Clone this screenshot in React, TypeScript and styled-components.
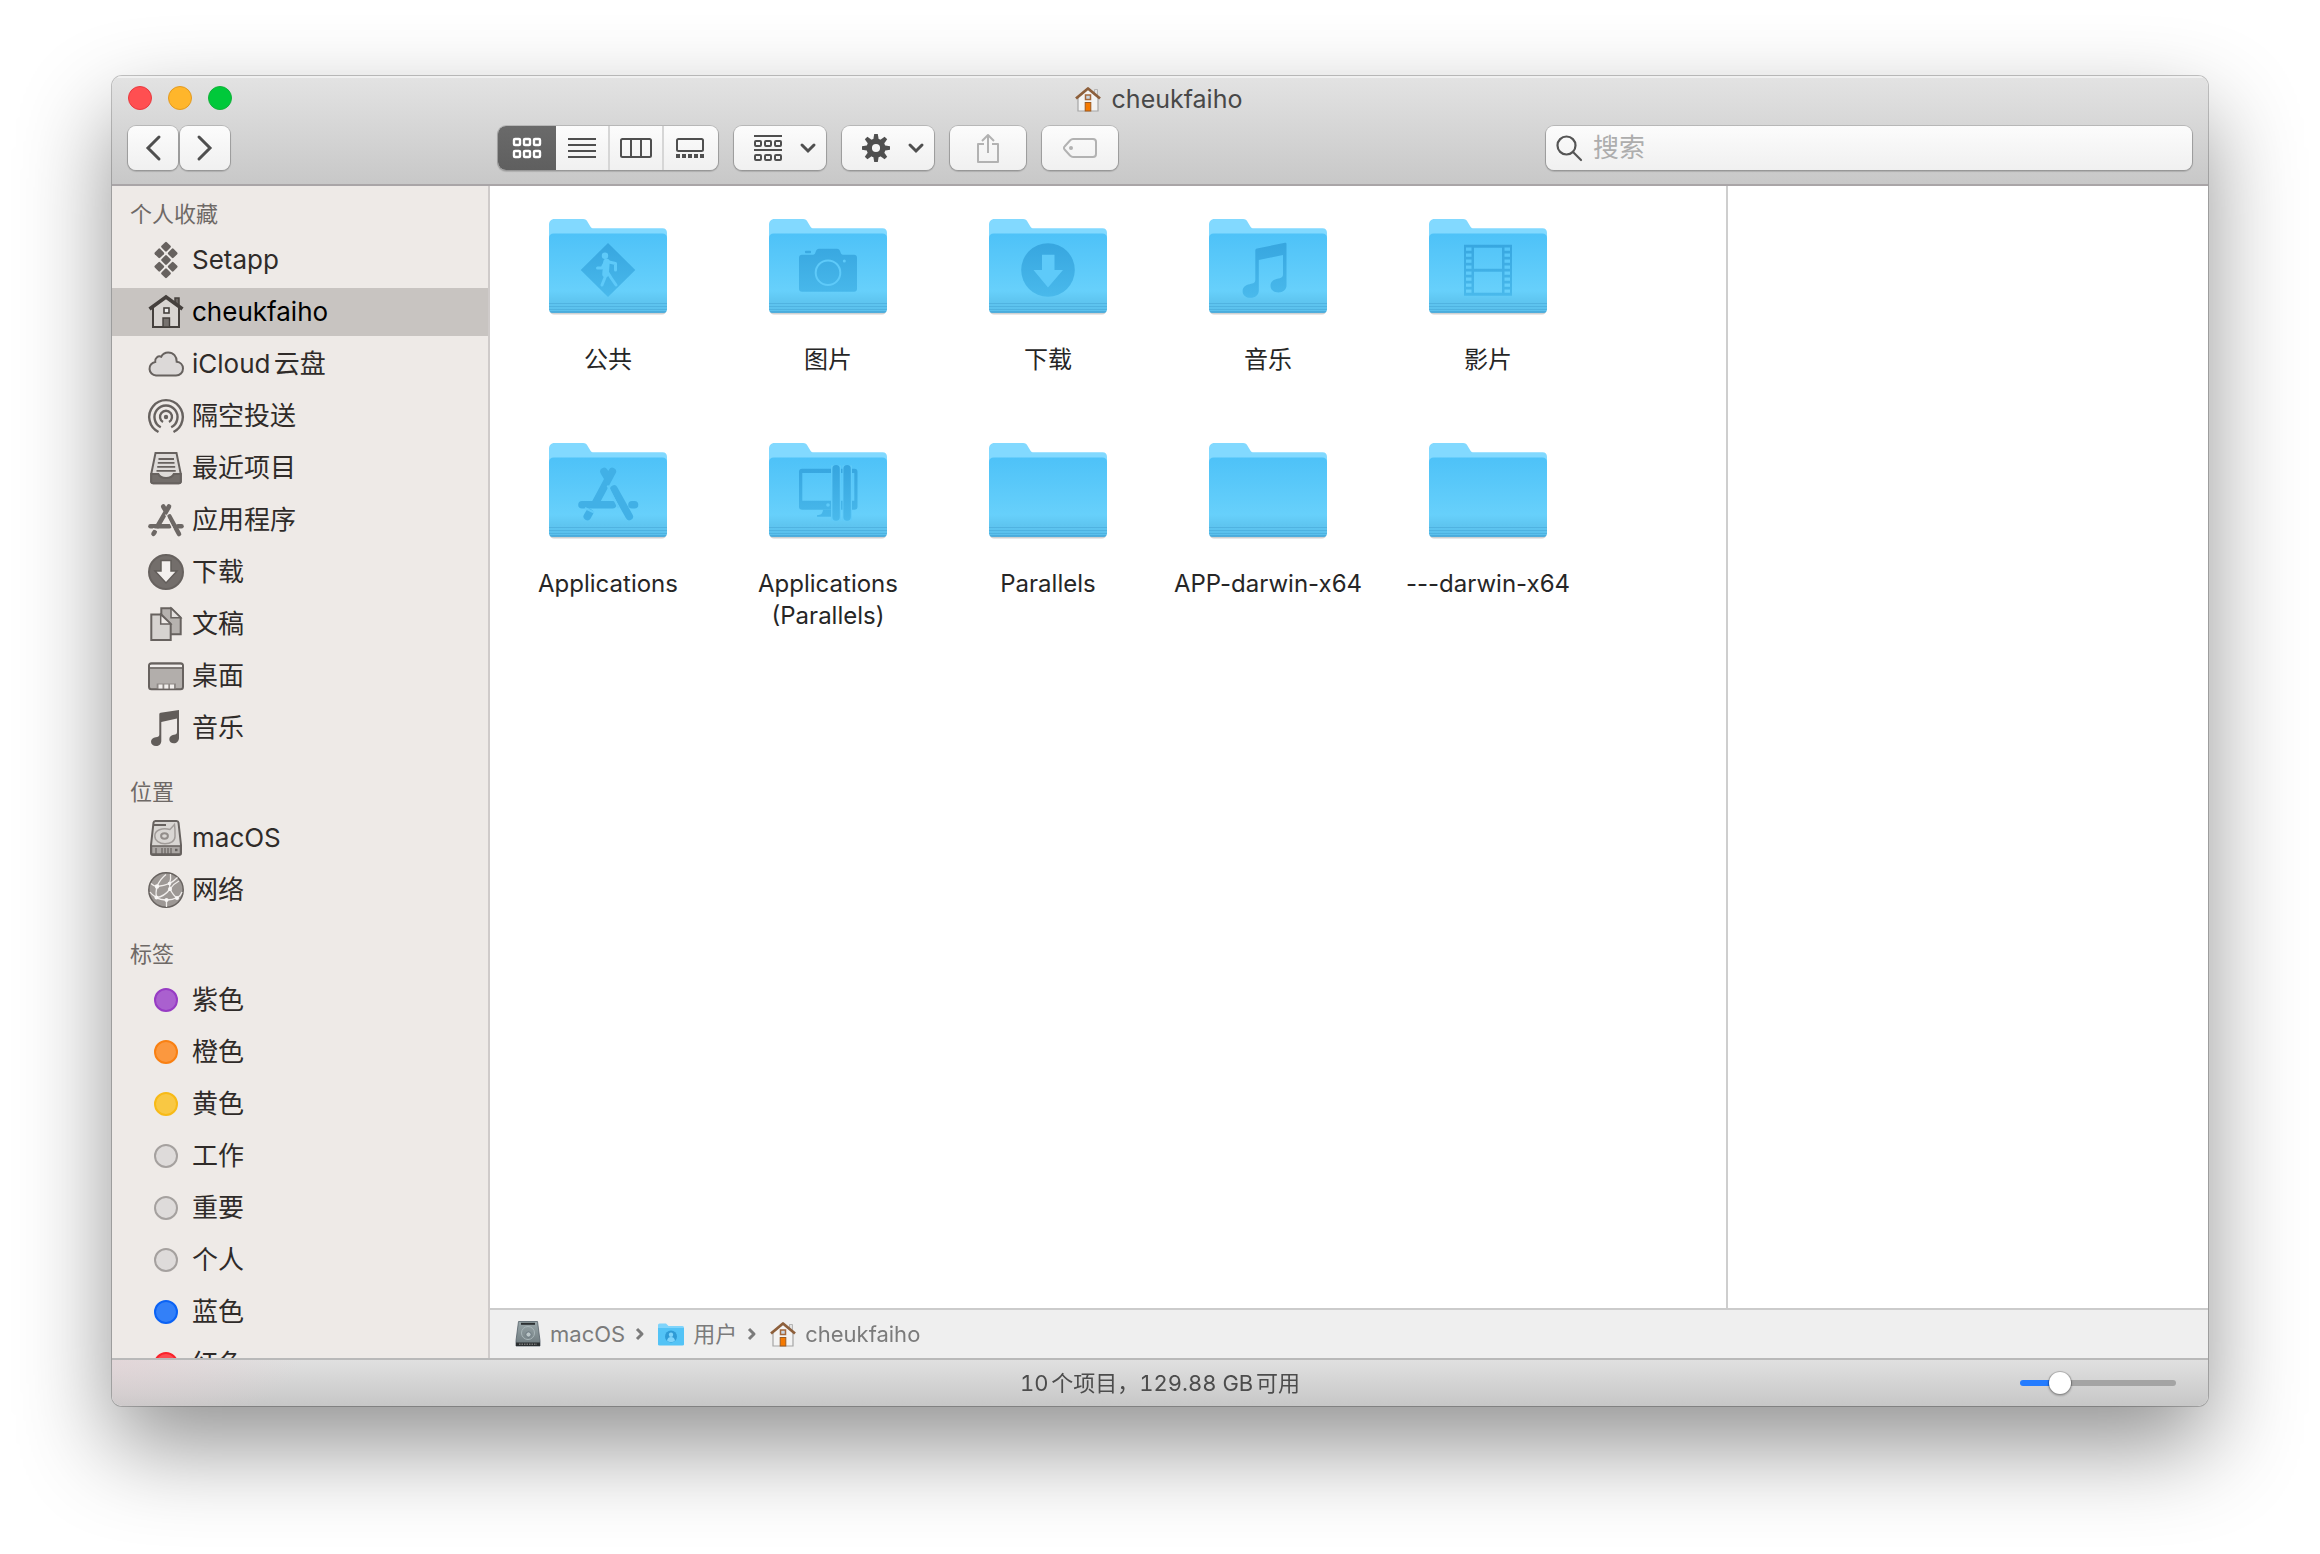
import React, { useState } from "react";
import styled, { createGlobalStyle, css } from "styled-components";

const GlobalStyle = createGlobalStyle`
  *, *::before, *::after { box-sizing: border-box; }
  body {
    margin: 0;
    background: #fff;
    color: #2f2b29;
    font-family: Inter, "Noto Sans CJK SC", sans-serif;
    -webkit-font-smoothing: antialiased;
    text-autospace: normal;
  }
  button, input { font: inherit; color: inherit; }
  ul, ol { list-style: none; margin: 0; padding: 0; }
  a { color: inherit; text-decoration: none; }
  svg { display: block; flex: none; overflow: visible; }
`;

/* ---------- window frame ---------- */

const Desktop = styled.div`
  display: flex;
  height: 100vh;
  min-height: 720px;
  padding: 76px 112px 148px;
`;

const Window = styled.main`
  flex: 1;
  min-width: 0;
  display: flex;
  flex-direction: column;
  overflow: hidden;
  border-radius: 10px;
  background: #fff;
  box-shadow: 0 0 0 1px rgba(0, 0, 0, 0.22), 0 40px 92px rgba(0, 0, 0, 0.43);
`;

const Header = styled.header`
  display: flex;
  flex-direction: column;
  gap: 6px;
  padding: 0 16px 14px;
  background: linear-gradient(#e3e3e3, #c8c8c8);
  border-bottom: 2px solid #a9a5a7;
  box-shadow: inset 0 2px 0 #f0f0f0;
`;

const TitleRow = styled.div`
  display: grid;
  grid-template-columns: 1fr auto 1fr;
  align-items: center;
  height: 44px;
`;

const Lights = styled.div`
  display: flex;
  gap: 16px;
`;

const Light = styled.button<{ $fill: string; $edge: string }>`
  width: 24px;
  height: 24px;
  padding: 0;
  border: 1px solid ${(p) => p.$edge};
  border-radius: 50%;
  background: ${(p) => p.$fill};
`;

const Title = styled.h1`
  display: flex;
  align-items: center;
  gap: 10px;
  margin: 0;
  padding: 2px 4px 0 0;
  font-size: 25px;
  line-height: 32px;
  font-weight: 400;
  color: #484848;
`;

const Toolbar = styled.div`
  display: flex;
  align-items: center;
  gap: 16px;
`;

const NavArea = styled.div`
  display: flex;
  gap: 2px;
  width: 354px;
`;

const raised = css`
  height: 44px;
  border: 0;
  border-radius: 8px;
  background: linear-gradient(#fcfcfc, #f0f0f0);
  box-shadow: 0 0 0 1px rgba(0, 0, 0, 0.13), 0 1px 1px 1px rgba(0, 0, 0, 0.14);
`;

const ToolButton = styled.button<{ $width: number; $faded?: boolean }>`
  ${raised}
  display: flex;
  align-items: center;
  justify-content: center;
  width: ${(p) => p.$width}px;
  padding: 0;
  color: ${(p) => (p.$faded ? "#b2b2b2" : "#4f4f4f")};
`;

const MenuButton = styled(ToolButton)`
  gap: 18px;
  padding-left: 10px;
`;

const Segments = styled.div`
  ${raised}
  display: flex;
  overflow: hidden;
`;

const Segment = styled.button<{ $active: boolean }>`
  display: flex;
  align-items: center;
  justify-content: center;
  width: ${(p) => (p.$active ? 58 : 54)}px;
  padding: 0;
  border: 0;
  border-right: ${(p) => (p.$active ? "0" : "2px solid #d6d6d6")};
  background: ${(p) => (p.$active ? "linear-gradient(#6a6a6a, #5f5f5f)" : "transparent")};
  color: ${(p) => (p.$active ? "#fff" : "#4f4f4f")};
  &:last-child { border-right-color: transparent; }
`;

const SearchField = styled.label`
  ${raised}
  display: flex;
  align-items: center;
  gap: 10px;
  flex: 0 1 646px;
  min-width: 120px;
  margin-left: auto;
  padding: 0 10px;
  color: #555;
`;

const SearchInput = styled.input`
  flex: 1;
  min-width: 0;
  padding: 0;
  border: 0;
  outline: 0;
  background: none;
  font-size: 26px;
  line-height: 32px;
  &::placeholder { color: #adadad; opacity: 1; }
`;

/* ---------- body ---------- */

const Body = styled.div`
  flex: 1;
  min-height: 0;
  display: flex;
`;

const Sidebar = styled.nav`
  flex: none;
  display: flex;
  flex-direction: column;
  gap: 26px;
  width: 378px;
  padding-top: 14px;
  overflow-y: auto;
  scrollbar-width: none;
  background: #eeeae7;
  border-right: 2px solid #cfcbca;
`;

const SectionTitle = styled.h2`
  margin: 0 0 8px;
  padding-left: 18px;
  font-size: 22px;
  line-height: 28px;
  font-weight: 400;
  color: #6e6966;
`;

const ItemList = styled.ul`
  display: flex;
  flex-direction: column;
  gap: 4px;
`;

const SideLink = styled.a<{ $selected?: boolean }>`
  display: flex;
  align-items: center;
  gap: 8px;
  height: 48px;
  padding-left: 36px;
  font-size: 26px;
  line-height: 32px;
  color: ${(p) => (p.$selected ? "#000" : "#2f2b29")};
  background: ${(p) => (p.$selected ? "#c8c4c1" : "transparent")};
`;

const TagDot = styled.span<{ $fill: string; $edge: string }>`
  width: 24px;
  height: 24px;
  margin: 0 6px;
  border: 2px solid ${(p) => p.$edge};
  border-radius: 50%;
  background: ${(p) => p.$fill};
`;

const Content = styled.div`
  flex: 1;
  min-width: 0;
  display: flex;
  flex-direction: column;
`;

const Panes = styled.div`
  flex: 1;
  min-height: 0;
  display: flex;
`;

const FileGrid = styled.ul`
  flex: 1;
  display: grid;
  grid-template-columns: repeat(auto-fill, 220px);
  grid-auto-rows: 224px;
  align-content: start;
  padding: 33px 8px 0;
`;

const Preview = styled.aside`
  flex: none;
  width: 482px;
  border-left: 2px solid #cecece;
`;

const FileButton = styled.button`
  display: flex;
  flex-direction: column;
  align-items: center;
  gap: 27px;
  width: 220px;
  padding: 0 10px;
  border: 0;
  background: none;
  font-size: 24px;
  line-height: 32px;
  color: #262626;
`;

const PathBar = styled.ol`
  display: flex;
  align-items: center;
  height: 50px;
  padding: 0 24px;
  border-top: 2px solid #cbcbcb;
  background: #efefef;
  font-size: 22px;
  line-height: 28px;
  color: #7b7b7b;
`;

const Crumb = styled.li`
  display: flex;
  align-items: center;
`;

const CrumbLink = styled.a`
  display: flex;
  align-items: center;
  gap: 8px;
`;

const CrumbArrow = styled.span`
  margin: 0 12px 0 10px;
`;

const StatusBar = styled.footer`
  display: grid;
  grid-template-columns: 1fr auto 1fr;
  align-items: center;
  height: 48px;
  padding: 0 32px;
  border-top: 2px solid #b9b9b9;
  background:
    radial-gradient(190px 70px at 0 0, rgba(228, 208, 212, 0.6), transparent),
    linear-gradient(#e0e0e0, #c7c7c7);
  font-size: 22px;
  line-height: 28px;
  color: #4c4c4c;
`;

const ZoomSlider = styled.input`
  grid-column: 3;
  justify-self: end;
  appearance: none;
  width: 156px;
  height: 28px;
  margin: 0;
  background: none;
  &::-webkit-slider-runnable-track {
    height: 6px;
    border-radius: 3px;
    background: linear-gradient(90deg, #247cff var(--fill), #a4a4a4 var(--fill));
  }
  &::-webkit-slider-thumb {
    appearance: none;
    width: 22px;
    height: 22px;
    margin-top: -8px;
    border-radius: 50%;
    background: #fff;
    box-shadow: 0 0 0 1px rgba(0, 0, 0, 0.14), 0 1px 2px 1px rgba(0, 0, 0, 0.22);
  }
`;

const StatusText = styled.span`
  grid-column: 2;
  font-variant-numeric: tabular-nums;
`;

/* ---------- toolbar drawings ---------- */

type SvgProps = { w: number; h: number; children: React.ReactNode; sw?: number };
const Line = ({ w, h, children, sw = 2 }: SvgProps) => (
  <svg width={w} height={h} viewBox={`0 0 ${w} ${h}`} fill="none" stroke="currentColor" strokeWidth={sw} aria-hidden="true">
    {children}
  </svg>
);

const cells = (y: number, h: number, w = 6) =>
  [1, 11, 21].map((x) => <rect key={`${x}-${y}`} x={x} y={y} width={w} height={h} rx="1" />);

const BackIcon = () => <Line w={16} h={26} sw={3}><path d="M14 2 3 13l11 11" strokeLinecap="round" /></Line>;
const ForwardIcon = () => <Line w={16} h={26} sw={3}><path d="m2 2 11 11L2 24" strokeLinecap="round" /></Line>;
const GridIcon = () => <Line w={28} h={20} sw={2.4}>{cells(1, 6)}{cells(13, 6)}</Line>;
const ListIcon = () => <Line w={28} h={20}><path d="M0 1h28M0 7h28M0 13h28M0 19h28" /></Line>;
const ColumnsIcon = () => (
  <Line w={32} h={20}><rect x="1" y="1" width="30" height="18" rx="1.5" /><path d="M11 1v18M21 1v18" /></Line>
);
const GalleryIcon = () => (
  <Line w={28} h={20}><rect x="1" y="1" width="26" height="12" rx="1.5" /><path d="M0 18h28" strokeWidth="4" strokeDasharray="4 2" /></Line>
);
const GroupIcon = () => (
  <Line w={28} h={26}><path d="M0 1h28M0 15h28" />{cells(6, 5)}{cells(20, 5)}</Line>
);
const DownIcon = () => <Line w={16} h={10} sw={3}><path d="m2 2 6 6 6-6" strokeLinecap="round" /></Line>;
const GearIcon = () => (
  <Line w={28} h={28} sw={5.5}>
    <circle cx="14" cy="14" r="6.8" />
    {[0, 45, 90, 135, 180, 225, 270, 315].map((a) => (
      <path key={a} d="M11.2 6 12.2 0h3.6l1 6z" transform={`rotate(${a} 14 14)`} fill="currentColor" stroke="none" />
    ))}
  </Line>
);
const ShareIcon = () => (
  <Line w={22} h={30}><path d="M7 11H1v18h20V11h-6M11 20V2M5 8l6-6 6 6" strokeLinejoin="round" /></Line>
);
const TagIcon = () => (
  <Line w={34} h={20}>
    <path d="M10 1h20a3 3 0 0 1 3 3v12a3 3 0 0 1-3 3H10c-1 0-2-.5-3-1.500L1.600 11.500a2 2 0 0 1 0-3L7 2.500C8 1.500 9 1 10 1Z" />
    <circle cx="8" cy="10" r="2" fill="currentColor" stroke="none" />
  </Line>
);
const SearchIcon = () => (
  <Line w={27} h={26} sw={2.2}><circle cx="10.500" cy="10.500" r="9" /><path d="m17 17 8 8" strokeLinecap="round" /></Line>
);
const CrumbChevron = () => <Line w={10} h={12} sw={3}><path d="m2 1 5 5-5 5" strokeLinejoin="round" /></Line>;

/* ---------- sidebar drawings ---------- */

const Glyph = ({ children }: { children: React.ReactNode }) => (
  <svg width="36" height="36" viewBox="0 0 36 36" fill="none" stroke="#67625f" strokeWidth="2" aria-hidden="true">
    {children}
  </svg>
);

const setappDots = [[18, 4.7], [11.3, 11.3], [24.7, 11.3], [18, 18], [11.3, 24.7], [24.7, 24.7], [18, 31.3]];

const SetappIcon = () => (
  <Glyph>
    {setappDots.map(([x, y]) => (
      <rect key={`${x}-${y}`} x={x - 3.8} y={y - 3.8} width="7.6" height="7.6" rx="1.2" fill="#67625f" stroke="none" transform={`rotate(45 ${x} ${y})`} />
    ))}
  </Glyph>
);
const HomeIcon = () => (
  <Glyph>
    <g stroke="#45403d">
      <path d="M27 10V4h4v9z" fill="#6a6562" strokeWidth="1.500" />
      <path d="M5 13v20h26V13L18 3z" fill="#d8d4d1" stroke="none" />
      <path d="M5 14v19h26V14" />
      <path d="M1.500 15 18 3l16.500 12" strokeWidth="3.600" />
      <rect x="16" y="14" width="5" height="5" fill="#eee" strokeWidth="1.600" />
      <path d="M15 33V24h6.500v9z" fill="#77726f" strokeWidth="1.400" />
    </g>
  </Glyph>
);
const CloudIcon = () => (
  <Glyph>
    <path d="M8 29.500a6.800 6.800 0 0 1-.800-13.500c-.600-4 2.800-6.500 6-5.300 1.300-2.600 4-4.200 7-4.200 5.200 0 8.700 4 8.500 9.200 3.600.400 6.300 3.200 6.300 6.700 0 4-3 7.100-7 7.100z" fill="#dcd9d8" />
  </Glyph>
);
const AirdropIcon = () => (
  <Glyph>
    <g strokeWidth="2.400">
      <path d="M10.500 34A16.800 16.800 0 1 1 25.500 34" />
      <path d="M12.800 29.300A11.500 11.500 0 1 1 23.200 29.300" />
      <path d="M15 24A6 6 0 1 1 21 24" />
    </g>
    <circle cx="18" cy="19" r="2.200" fill="#67625f" stroke="none" />
  </Glyph>
);
const RecentsIcon = () => (
  <Glyph>
    <path d="M7.500 3h21l4.300 21v7.500a2 2 0 0 1-2 1.800H5.200a2 2 0 0 1-2-1.800V24z" fill="#dedbd9" />
    <path d="M3.300 24h7c2.500 5.300 13 5.300 15.500 0h7v7.500a2 2 0 0 1-2 1.800H5.200a2 2 0 0 1-2-1.800z" fill="#736e6b" />
    <path d="M10.500 9h15.500M9.800 12.800h16.700M9.200 16.800h18M8.500 20.800h19.200" strokeWidth="1.800" />
  </Glyph>
);
const AppsIcon = () => (
  <Glyph>
    <g strokeWidth="4.600" strokeLinecap="round" stroke="#6d6865">
      <path d="M21 4.500 9.700 24" />
      <path d="M15.200 4.500 17 7.500" />
      <path d="M2.500 24.300h19" />
      <path d="M30 24.300h3.500" />
      <path d="M5.500 31.800 6.700 30" />
      <path d="M31 32 21.500 14.500" />
    </g>
    <path d="M17.600 12.500 25 27M9 28.200l-4-1.700" stroke="#eeeae7" strokeWidth="1.200" />
  </Glyph>
);
const DownloadIcon = () => (
  <Glyph>
    <circle cx="18" cy="18" r="17" fill="#736e6b" />
    <path d="M13 6.500h10v10.500h6L18 29 7 17h6z" fill="#f3f0ee" stroke="#625d5a" strokeWidth="1.500" />
  </Glyph>
);
const DocsIcon = () => (
  <Glyph>
    <path d="M13.300 2.300h10l9.400 9.400v16.500H13.300z" fill="#b6b2af" />
    <path d="M23 2.300v9.400h9.700z" fill="#e3e0de" strokeWidth="1.500" />
    <path d="M3.300 8.500h10l9.400 9.400v16H3.300z" fill="#d6d3d0" />
    <path d="M12.700 8.500v9.400h10z" fill="#eeeae7" strokeWidth="1.500" />
  </Glyph>
);
const DesktopIcon = () => (
  <Glyph>
    <rect x="1" y="5.300" width="34" height="26" rx="2.500" fill="#b2aeab" />
    <path d="M2 7h32v2.300H2z" fill="#f1eeec" stroke="none" />
    <path d="M1 10h34" strokeWidth="1.400" />
    <path d="M9.300 30.300V26h18v4.300" strokeWidth="1.200" stroke="#8d8885" fill="#8d8885" />
    <path d="M10.500 26.500h4v4h-4zM16.300 26.500h4v4h-4zM22 26.500h4v4h-4z" fill="#f1eeec" stroke="none" />
  </Glyph>
);
const MusicIcon = () => (
  <Glyph>
    <path d="M11.300 4.300c0-1 .500-1.400 1.300-1.600L31 0v28c0 3-2.300 5.300-5.200 5.300-2.600 0-4.500-1.600-4.500-4 0-2.600 2-4.300 4.600-4.600 2.100-.2 3.100-.7 3.100-2.700V8.600L13.300 12v19c0 3-2.300 5-5.300 5-2.800 0-5-1.500-5-4.200 0-2.500 2-4.200 4.700-4.500 2.400-.2 3.600-.8 3.600-2.800z" fill="#625d5a" stroke="none" />
  </Glyph>
);
const DriveIcon = () => (
  <Glyph>
    <path d="M7.500 1h21a2 2 0 0 1 2 1.700L33 25v8a2 2 0 0 1-2 2H5a2 2 0 0 1-2-2v-8L5.500 2.700A2 2 0 0 1 7.500 1z" fill="#d9d6d3" />
    <path d="M3.500 26h29v8h-29z" fill="#aaa6a3" strokeWidth="1.500" />
    <path d="M6 5h12" />
    <path d="M26.500 4.500 22 9.500C14 7 6.800 10.500 6.800 16c0 4.500 4.700 7.800 10.200 7.800S27 21 27 16.500c0-2 .3-7-.5-12z" stroke="#a19c99" strokeWidth="1.500" />
    <ellipse cx="16.500" cy="16" rx="3.400" ry="2.700" stroke="#928d8a" />
    <path d="M8 28v6M14 28v6M17 28v6M20 28v6M23 28v6" strokeWidth="1.200" />
    <path d="M27 30h2.500" strokeWidth="2.400" />
  </Glyph>
);
const NetworkIcon = () => (
  <Glyph>
    <circle cx="18" cy="18" r="17.200" fill="#9d9895" strokeWidth="1.500" />
    <g stroke="#f1eeec" strokeWidth="1.300">
      <path d="M3 11.500c2 2 4 3 6 3 2-5 5-9 9-12M9 14.500c5-.500 9-1.500 12.500-3 4-2 6-4 8-6M21.500 11.500c1-3 1.500-6 1-9.500M9 14.500c-1 4-1.500 7-.500 11M21.500 11.500l.5 5.500c2-3 5-6 9-8M22 17c2 4 4 7 7 9M22 17c-3 4-8 8-13.500 8.500M8.500 25.500c3 2 6 2.500 10 2.500s8-1 10.500-2.500M2 20c2 3 4 4 6.500 5.500M18.500 28v7M29 26c2-1 4-3 5-6" />
    </g>
    <g fill="#f8f6f5" stroke="none">
      <circle cx="9" cy="14.500" r="2.200" /><circle cx="22" cy="17" r="2" /><circle cx="8.500" cy="25.500" r="2" />
      <circle cx="18.500" cy="28" r="2" /><circle cx="29" cy="26" r="2" /><circle cx="21.500" cy="11.500" r="1.800" />
    </g>
  </Glyph>
);

/* ---------- coloured small drawings ---------- */

const HouseIcon = () => (
  <svg width="28" height="28" viewBox="0 0 28 28" aria-hidden="true">
    <path d="M20.500 4.500h3V11h-3z" fill="#e2e2e2" stroke="#b5b5b5" />
    <path d="M4 12 14 3.500 24 12v14H4z" fill="#f3f3f3" stroke="#a5a5a5" strokeWidth="1.200" />
    <path d="M2 13.500 14 3.500l12 10" fill="none" stroke="#8d5f3b" strokeWidth="2.800" strokeLinejoin="round" />
    <rect x="11.500" y="10" width="5" height="4.500" fill="#c9d6e2" stroke="#a5683b" strokeWidth="1.500" />
    <rect x="11.200" y="17.500" width="5.600" height="8.500" fill="#f57900" stroke="#9d5a20" />
  </svg>
);

const DiskIcon = () => (
  <svg width="28" height="28" viewBox="0 0 28 28" aria-hidden="true">
    <defs>
      <linearGradient id="disk" x1="0" y1="0" x2="0" y2="1">
        <stop offset="0" stopColor="#9aa7aa" />
        <stop offset="1" stopColor="#6c787c" />
      </linearGradient>
    </defs>
    <path d="M4.500 1.500h19L26 20.500v5.500H2v-5.500z" fill="url(#disk)" stroke="#56616a" strokeWidth="0.800" />
    <path d="M2 22.500h24V26H2z" fill="#2b2f31" />
    <path d="M5 24.200h18" stroke="#777" strokeWidth="1.500" strokeDasharray="1.500 1" />
    <path d="M7 3.800h14" stroke="#2b2f31" strokeWidth="2" />
    <circle cx="14" cy="13" r="6.500" fill="none" stroke="#a9b6b9" />
    <circle cx="14.500" cy="14.500" r="2.600" fill="#bcc7c9" stroke="#63717a" strokeWidth="0.800" />
  </svg>
);

const UsersFolderIcon = () => (
  <svg width="28" height="28" viewBox="0 0 28 28" aria-hidden="true">
    <path d="M1 5a1.500 1.500 0 0 1 1.500-1.500H9L11.500 6h14A1.500 1.500 0 0 1 27 7.500V25H1z" fill="#7fd4fb" />
    <path d="M1 8h26v16a1.500 1.500 0 0 1-1.500 1.500h-23A1.500 1.500 0 0 1 1 24z" fill="#53c3f6" />
    <circle cx="14" cy="16.500" r="6" fill="#2f9bd6" />
    <circle cx="14" cy="14.700" r="2.200" fill="#7fd4fb" />
    <path d="M10 20.500c.5-2.500 2-3.500 4-3.500s3.500 1 4 3.500c-2 2-6 2-8 0z" fill="#7fd4fb" />
  </svg>
);

/* ---------- folder drawings ---------- */

const FolderGlyph = styled.g`
  color: #5ecaf9;
`;

const Folder = ({ children }: { children?: React.ReactNode }) => {
  const id = React.useId();
  return (
    <svg width="120" height="98" viewBox="0 0 120 98" aria-hidden="true">
      <defs>
        <linearGradient id={`${id}f`} x1="0" y1="15" x2="0" y2="94" gradientUnits="userSpaceOnUse">
          <stop offset="0" stopColor="#4ec2f8" />
          <stop offset="0.720" stopColor="#67d0fb" />
          <stop offset="0.840" stopColor="#5fc6f1" />
          <stop offset="1" stopColor="#5abfeb" />
        </linearGradient>
        <linearGradient id={`${id}g`} x1="0" y1="22" x2="0" y2="80" gradientUnits="userSpaceOnUse">
          <stop offset="0" stopColor="#36a5df" />
          <stop offset="1" stopColor="#4abaec" />
        </linearGradient>
      </defs>
      <rect x="2" y="86" width="116" height="9.500" rx="4" fill="#000" opacity="0.180" />
      <path d="M1 6c0-3.500 2-6 5.500-6H35c2.500 0 3.700 1.200 4.800 3.200l2.400 4C43.200 8.800 44 9.300 46 9.300h68.500c3 0 4.500 1.800 4.500 4.700v30H1z" fill="#82d9ff" />
      <path d="M1 19c0-2.800 1.800-4.500 4.500-4.500h109c2.700 0 4.500 1.700 4.500 4.500v71c0 2.500-1.200 3.800-3.500 3.800H4.500C2.200 93.800 1 92.500 1 90z" fill={`url(#${id}f)`} />
      <path d="M1 84.500h118M1 87.500h118M1 90.500h118" stroke="#47a9d8" strokeWidth="1" opacity="0.600" />
      <path d="M1.500 92.300h117a3.200 3.200 0 0 1-3 1.500H4.500a3.200 3.200 0 0 1-3-1.500z" fill="#45a7d8" />
      <FolderGlyph fill={`url(#${id}g)`} stroke="none">{children}</FolderGlyph>
    </svg>
  );
};

const PublicArt = () => (
  <>
    <path d="M60 24 87.300 51 60 78 32.700 51z" />
    <circle cx="57" cy="36.800" r="3.200" fill="currentColor" />
    <path d="M58.500 43 57.500 55" stroke="currentColor" strokeWidth="6.500" strokeLinecap="round" fill="none" />
    <path d="M57 43.500 54 49h-4.500M61 43l6.500 1.500V51M58 56l-4 10M60 54l3.500 5.500 4.500 6.500" stroke="currentColor" strokeWidth="3" strokeLinecap="round" strokeLinejoin="round" fill="none" />
  </>
);
const PicturesArt = () => (
  <>
    <path d="M34 35.700h11c1.500 0 2-1 2.500-2.500.700-2.200 1.500-3.500 3.500-3.500h18c2 0 2.800 1.300 3.500 3.500.500 1.500 1 2.500 2.500 2.500h11a3 3 0 0 1 3 3v31a3 3 0 0 1-3 3H34a3 3 0 0 1-3-3v-31a3 3 0 0 1 3-3z" />
    <rect x="37" y="31.700" width="6" height="2.600" rx="0.800" />
    <circle cx="60" cy="53.700" r="12.300" fill="none" stroke="currentColor" strokeWidth="2" />
    <circle cx="76.300" cy="42" r="1.500" fill="currentColor" />
  </>
);
const DownloadsArt = () => (
  <>
    <circle cx="60" cy="51" r="26.800" />
    <path d="M54 35.700h12.500V51H75L60 68.500 45.500 51H54z" fill="currentColor" />
  </>
);
const MusicArt = () => (
  <path d="M47.300 31.500c0-1.300.500-1.900 1.700-2.100l28-5.600c.900-.200 1.500.200 1.500 1.200v41.500c0 4-3.500 6.900-8 6.900-4.700 0-8-2.700-8-6.700 0-3.700 2.700-6 6.700-6.900 4.300-.8 5.800-1.500 5.800-4.500V36L50.800 41v30.500c0 4.500-3.500 7.300-8.300 7.300-4.700 0-7.900-2.600-7.900-6.600s2.900-6.200 7-7c4.200-.8 5.700-1.400 5.700-4.600z" />
);
const holes = [0, 1, 2, 3, 4, 5, 6, 7].map((n) => `M38 ${28.5 + n * 6}h5.500v3.200H38zM76.500 ${28.5 + n * 6}H82v3.200h-5.500z`).join("");
const MoviesArt = () => (
  <path fillRule="evenodd" d={`M36 25.700h48v51H36zM46 28.700v21h28v-21zM46 52.700v21h28v-21z${holes}`} />
);
const AppsArt = () => (
  <>
    <g fill="none" stroke="#41b0e6" strokeWidth="7.600" strokeLinecap="round">
      <path d="M64.300 28.500 47.500 60M56 28.500l3.500 6M34 61.700h30.500M84 61.700h2.500M39.300 73.500l2.200-3.800M81.300 73.500 66 46" />
    </g>
    <path d="M59.500 42.500 70.500 65M46 69.500 37 65" stroke="currentColor" strokeWidth="2" fill="none" />
  </>
);
const ParallelsArt = () => (
  <>
    <path fillRule="evenodd" d="M34 25.700h52.500a3 3 0 0 1 3 3v35a3 3 0 0 1-3 3H34a3 3 0 0 1-3-3v-35a3 3 0 0 1 3-3zM34.300 30v27.700h52V30z" />
    <path d="M55 66.700h8v7H49v-1.500c4-.200 5.500-1.500 6-5.500z" />
    <circle cx="60" cy="62" r="1.800" fill="currentColor" />
    <path d="M63 22.500h10v55H63zM74.500 22.500h9.500v55h-9.500z" fill="currentColor" />
    <rect x="64.400" y="22" width="7.400" height="55.700" rx="3.700" />
    <rect x="75.400" y="22" width="7.400" height="55.700" rx="3.700" />
  </>
);

/* ---------- data ---------- */

const sections = [
  {
    title: "个人收藏",
    items: [
      { name: "Setapp", Icon: SetappIcon },
      { name: "cheukfaiho", Icon: HomeIcon, selected: true },
      { name: "iCloud云盘", Icon: CloudIcon },
      { name: "隔空投送", Icon: AirdropIcon },
      { name: "最近项目", Icon: RecentsIcon },
      { name: "应用程序", Icon: AppsIcon },
      { name: "下载", Icon: DownloadIcon },
      { name: "文稿", Icon: DocsIcon },
      { name: "桌面", Icon: DesktopIcon },
      { name: "音乐", Icon: MusicIcon },
    ],
  },
  {
    title: "位置",
    items: [
      { name: "macOS", Icon: DriveIcon },
      { name: "网络", Icon: NetworkIcon },
    ],
  },
];

const tags = [
  { name: "紫色", fill: "#aa60cf", edge: "#973cc4" },
  { name: "橙色", fill: "#fb983f", edge: "#f98012" },
  { name: "黄色", fill: "#f9c843", edge: "#f7ba17" },
  { name: "工作", fill: "#dedbda", edge: "#a5a19f" },
  { name: "重要", fill: "#dedbda", edge: "#a5a19f" },
  { name: "个人", fill: "#dedbda", edge: "#a5a19f" },
  { name: "蓝色", fill: "#3380f8", edge: "#0a62f5" },
  { name: "红色", fill: "#fc4b51", edge: "#f9232b" },
];

const files = [
  { name: "公共", Art: PublicArt },
  { name: "图片", Art: PicturesArt },
  { name: "下载", Art: DownloadsArt },
  { name: "音乐", Art: MusicArt },
  { name: "影片", Art: MoviesArt },
  { name: "Applications", Art: AppsArt },
  { name: "Applications (Parallels)", Art: ParallelsArt },
  { name: "Parallels" },
  { name: "APP-darwin-x64" },
  { name: "---darwin-x64" },
];

const views = [
  { name: "图标", Icon: GridIcon },
  { name: "列表", Icon: ListIcon },
  { name: "分栏", Icon: ColumnsIcon },
  { name: "画廊", Icon: GalleryIcon },
];

const path = [
  { name: "macOS", Icon: DiskIcon },
  { name: "用户", Icon: UsersFolderIcon },
  { name: "cheukfaiho", Icon: HouseIcon },
];

export default function App() {
  const [view, setView] = useState("图标");
  const [size, setSize] = useState(22);

  return (
    <Desktop>
      <GlobalStyle />
      <Window>
        <Header>
          <TitleRow>
            <Lights>
              <Light $fill="#ff4f51" $edge="#e8393f" aria-label="关闭" />
              <Light $fill="#ffb62b" $edge="#e29a20" aria-label="最小化" />
              <Light $fill="#00c93a" $edge="#12b03a" aria-label="缩放" />
            </Lights>
            <Title><HouseIcon />cheukfaiho</Title>
          </TitleRow>
          <Toolbar>
            <NavArea>
              <ToolButton $width={50} aria-label="后退"><BackIcon /></ToolButton>
              <ToolButton $width={50} aria-label="前进"><ForwardIcon /></ToolButton>
            </NavArea>
            <Segments role="group" aria-label="显示方式">
              {views.map(({ name, Icon }) => (
                <Segment key={name} $active={view === name} aria-pressed={view === name} aria-label={name} onClick={() => setView(name)}>
                  <Icon />
                </Segment>
              ))}
            </Segments>
            <MenuButton $width={92} aria-label="分组" aria-haspopup="menu"><GroupIcon /><DownIcon /></MenuButton>
            <MenuButton $width={92} aria-label="操作" aria-haspopup="menu"><GearIcon /><DownIcon /></MenuButton>
            <ToolButton $width={76} $faded aria-label="共享"><ShareIcon /></ToolButton>
            <ToolButton $width={76} $faded aria-label="标签"><TagIcon /></ToolButton>
            <SearchField>
              <SearchIcon />
              <SearchInput type="text" placeholder="搜索" aria-label="搜索" />
            </SearchField>
          </Toolbar>
        </Header>

        <Body>
          <Sidebar>
            {sections.map((section) => (
              <section key={section.title}>
                <SectionTitle>{section.title}</SectionTitle>
                <ItemList>
                  {section.items.map(({ name, Icon, selected }: { name: string; Icon: React.FC; selected?: boolean }) => (
                    <li key={name}>
                      <SideLink href="#" $selected={selected}><Icon />{name}</SideLink>
                    </li>
                  ))}
                </ItemList>
              </section>
            ))}
            <section>
              <SectionTitle>标签</SectionTitle>
              <ItemList>
                {tags.map((tag) => (
                  <li key={tag.name}>
                    <SideLink href="#"><TagDot $fill={tag.fill} $edge={tag.edge} />{tag.name}</SideLink>
                  </li>
                ))}
              </ItemList>
            </section>
          </Sidebar>

          <Content>
            <Panes>
              <FileGrid>
                {files.map(({ name, Art }) => (
                  <li key={name}>
                    <FileButton>
                      <Folder>{Art && <Art />}</Folder>
                      {name}
                    </FileButton>
                  </li>
                ))}
              </FileGrid>
              <Preview aria-label="预览" />
            </Panes>
            <PathBar>
              {path.map(({ name, Icon }, i) => (
                <Crumb key={name}>
                  <CrumbLink href="#"><Icon />{name}</CrumbLink>
                  {i < path.length - 1 && <CrumbArrow><CrumbChevron /></CrumbArrow>}
                </Crumb>
              ))}
            </PathBar>
          </Content>
        </Body>

        <StatusBar>
          <StatusText>10个项目，129.88 GB可用</StatusText>
          <ZoomSlider
            type="range"
            min={0}
            max={100}
            value={size}
            aria-label="图标大小"
            style={{ "--fill": `${size}%` } as React.CSSProperties}
            onChange={(e) => setSize(Number(e.target.value))}
          />
        </StatusBar>
      </Window>
    </Desktop>
  );
}
